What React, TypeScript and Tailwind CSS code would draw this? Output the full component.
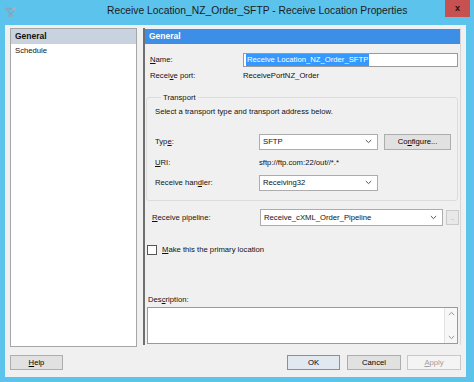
import React from "react";

function Chevron() {
  return (
    <svg width="7" height="5" viewBox="0 0 7 5" className="shrink-0">
      <path d="M0.8 1 L3.5 3.6 L6.2 1" fill="none" stroke="#444" strokeWidth="0.9" />
    </svg>
  );
}

function Combo({ value, width }: { value: string; width: string }) {
  return (
    <div className={`${width} h-full bg-white border border-[#acacac] flex items-center pl-[3px] pr-[5px]`}>
      <span className="flex-1">{value}</span>
      <Chevron />
    </div>
  );
}

function Btn({ children, kind = "normal", className = "" }: { children: React.ReactNode; kind?: "normal" | "default" | "disabled"; className?: string }) {
  const styles = {
    normal: "bg-[#e1e1e1] border-[#adadad] text-black",
    default: "bg-[#e1e8ef] border-[#5c9ad8] text-black",
    disabled: "bg-[#f4f4f4] border-[#c8c8c8] text-[#a0a0a0]",
  }[kind];
  return (
    <div className={`h-full border flex items-center justify-center ${styles} ${className}`}>{children}</div>
  );
}

export default function App() {
  return (
    <div className="w-[474px] h-[382px] bg-[#5cc3ec] flex flex-col font-['Liberation_Sans',Arial,sans-serif] text-[7.7px] leading-none text-[#111] overflow-hidden">
      {/* title bar */}
      <div className="h-[25px] flex items-start shrink-0">
        <svg width="12" height="11" viewBox="0 0 12 11" className="ml-[5px] mt-[7px]">
          <rect x="0.5" y="0.5" width="4" height="3" fill="#8fa6b8" />
          <rect x="7" y="0.5" width="4" height="3" fill="#9fb3c3" />
          <rect x="3.5" y="7" width="4" height="3" fill="#8fa6b8" />
          <path d="M2.5 3.5 L5.5 7 M9 3.5 L5.5 7 M4.5 2 L7 2" stroke="#7d93a6" strokeWidth="0.8" />
        </svg>
        <div className="ml-[90px] mt-[6px] text-[10.3px] text-[#1c1c1c] whitespace-nowrap">
          Receive Location_NZ_Order_SFTP - Receive Location Properties
        </div>
        <div className="ml-auto mr-[4px] w-[25px] h-[17px] bg-[#c75050] flex items-center justify-center text-[9px] font-bold text-[#2a1010]">
          x
        </div>
      </div>

      {/* client */}
      <div className="flex-1 ml-[5px] mr-[8px] mb-[5px] bg-[#f0f0f0] flex flex-col pt-[3px] px-[5px] pb-[7px]">
        <div className="flex gap-[6px] h-[319px]">
          {/* left nav */}
          <div className="w-[127px] h-full bg-white border border-[#a6a6a6] flex flex-col">
            <div className="h-[15px] bg-[#c9d3df] flex items-center pl-[4px] font-bold text-[8.5px]">General</div>
            <div className="h-[14px] flex items-center pl-[4px]">Schedule</div>
          </div>

          {/* right page */}
          <div className="w-[318px] h-[317px] border-l-2 border-[#6f6f6f] border-r border-r-[#d6d6d6] flex flex-col">
            <div className="h-[15px] mt-[1px] bg-[#3d8ee6] text-white font-bold text-[8.5px] flex items-center pl-[4px]">General</div>

            <div className="h-[14px] mt-[9px] flex items-center pl-[5px]">
              <div className="w-[93px]"><u>N</u>ame:</div>
              <div className="w-[215px] h-full bg-white border border-[#9a9a9a] flex items-center pl-[2px]">
                <span className="bg-[#3399ff] text-white px-[1px] py-[2px]">Receive Location_NZ_Order_SFTP</span>
              </div>
            </div>

            <div className="h-[12px] mt-[3px] flex items-center pl-[5px]">
              <div className="w-[93px]">Recei<u>v</u>e port:</div>
              <div>ReceivePortNZ_Order</div>
            </div>

            <fieldset className="mt-[12px] ml-[1px] w-[312px] h-[107px] border border-[#dcdcdc] rounded-[3px] pl-[8px] flex flex-col">
              <legend className="ml-[6px] px-[2px]">Transport</legend>
              <div className="h-[12px] mt-[4px] flex items-center">Select a transport type and transport address below.</div>

              <div className="h-[16px] mt-[16px] flex items-center">
                <div className="w-[104px]">Typ<u>e</u>:</div>
                <Combo value="SFTP" width="w-[119px]" />
                <Btn className="w-[67px] ml-[6px] h-[17px]">
                  Co<u>n</u>figure...
                </Btn>
              </div>

              <div className="h-[12px] mt-[7px] flex items-center">
                <div className="w-[104px]"><u>U</u>RI:</div>
                <div>sftp://ftp.com:22/out//*.*</div>
              </div>

              <div className="h-[16px] mt-[6px] flex items-center">
                <div className="w-[104px]">Receive han<u>d</u>ler:</div>
                <Combo value="Receiving32" width="w-[119px]" />
              </div>
            </fieldset>

            <div className="h-[17px] mt-[8px] flex items-center pl-[7px]">
              <div className="w-[108px]"><u>R</u>eceive pipeline:</div>
              <Combo value="Receive_cXML_Order_Pipeline" width="w-[183px]" />
              <div className="ml-[3px] w-[13px] h-[15px] bg-[#e8e8e8] border border-[#cacaca] flex items-end justify-center pb-[3px] text-[6px] text-[#888]">
                ..
              </div>
            </div>

            <div className="h-[11px] mt-[18px] flex items-center pl-[2px]">
              <div className="w-[10px] h-[10px] bg-white border border-[#555]" />
              <div className="ml-[5px]"><u>M</u>ake this the primary location</div>
            </div>

            <div className="h-[10px] mt-[40px] flex items-center pl-[3px]">
              Des<u>c</u>ription:
            </div>

            <div className="mt-[2px] ml-[2px] w-[311px] h-[37px] bg-white border border-[#9a9a9a] flex justify-end">
              <div className="w-[13px] h-full border-l border-[#e3e3e3] bg-[#f7f7f7] flex flex-col justify-between items-center py-[3px]">
                <svg width="7" height="5" viewBox="0 0 7 5">
                  <path d="M0.8 4 L3.5 1.4 L6.2 4" fill="none" stroke="#888" strokeWidth="0.9" />
                </svg>
                <svg width="7" height="5" viewBox="0 0 7 5">
                  <path d="M0.8 1 L3.5 3.6 L6.2 1" fill="none" stroke="#888" strokeWidth="0.9" />
                </svg>
              </div>
            </div>
          </div>
        </div>

        {/* buttons */}
        <div className="h-[15px] mt-[8px] flex">
          <Btn className="w-[53px]"><u>H</u>elp</Btn>
          <Btn kind="default" className="w-[53px] ml-auto">OK</Btn>
          <Btn className="w-[54px] ml-[7px]">Cancel</Btn>
          <Btn kind="disabled" className="w-[54px] ml-[6px]"><u>A</u>pply</Btn>
        </div>
      </div>
    </div>
  );
}
